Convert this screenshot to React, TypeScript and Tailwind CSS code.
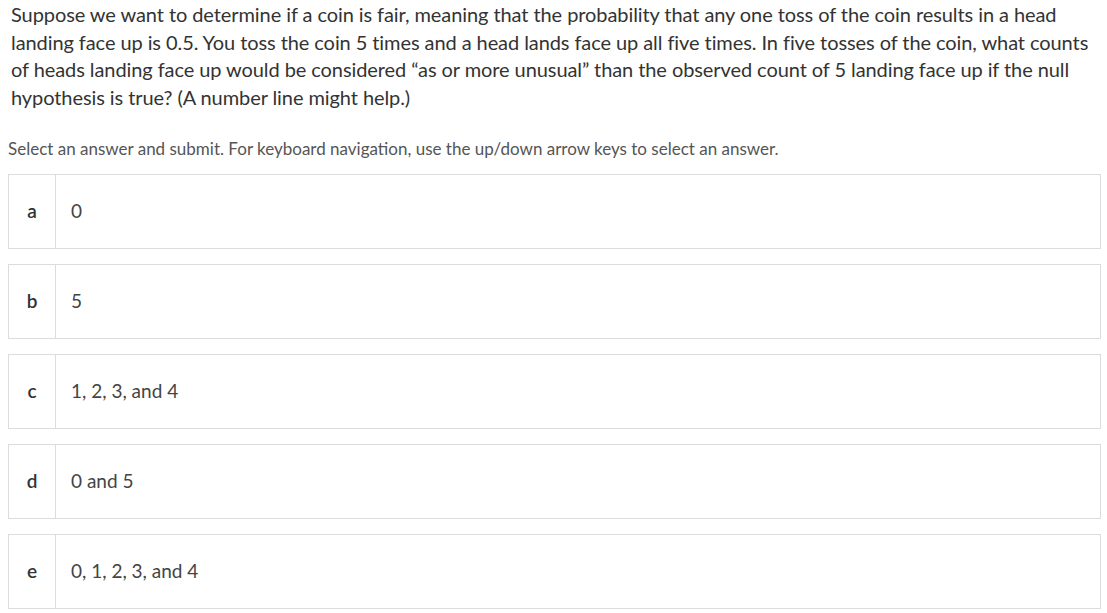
import React from 'react';

const answers = [
  { key: 'a', text: '0' },
  { key: 'b', text: '5' },
  { key: 'c', text: '1, 2, 3, and 4' },
  { key: 'd', text: '0 and 5' },
  { key: 'e', text: '0, 1, 2, 3, and 4' },
];

const questionLines = [
  'Suppose we want to determine if a coin is fair, meaning that the probability that any one toss of the coin results in a head',
  'landing face up is 0.5. You toss the coin 5 times and a head lands face up all five times. In five tosses of the coin, what counts',
  'of heads landing face up would be considered “as or more unusual” than the observed count of 5 landing face up if the null',
  'hypothesis is true? (A number line might help.)',
];

const App: React.FC = () => {
  return (
    <div className="bg-white min-h-screen font-['Lato',sans-serif] text-[#333]">
      <div className="px-[11px] pt-[1px] text-[20px] leading-[27.5px] tracking-[-0.08px] text-[#333]">
        {questionLines.map((line, i) => (
          <div key={i} className="whitespace-nowrap">
            {line}
          </div>
        ))}
      </div>

      <div className="px-2 mt-[27px] text-[17px] leading-[21px] text-[#555] whitespace-nowrap">
        Select an answer and submit. For keyboard navigation, use the up/down arrow keys to select an answer.
      </div>

      <div className="mx-2 mt-[15px] w-[1093px] flex flex-col gap-[15px]">
        {answers.map((a) => (
          <div key={a.key} className="flex h-[75px] border border-[#dcdcdc] bg-white">
            <div className="w-[47px] border-r border-[#dcdcdc] flex items-center justify-center text-[19px] font-semibold text-[#333]">
              {a.key}
            </div>
            <div className="flex items-center pl-[15px] text-[19px] text-[#444]">{a.text}</div>
          </div>
        ))}
      </div>
    </div>
  );
};

export default App;
